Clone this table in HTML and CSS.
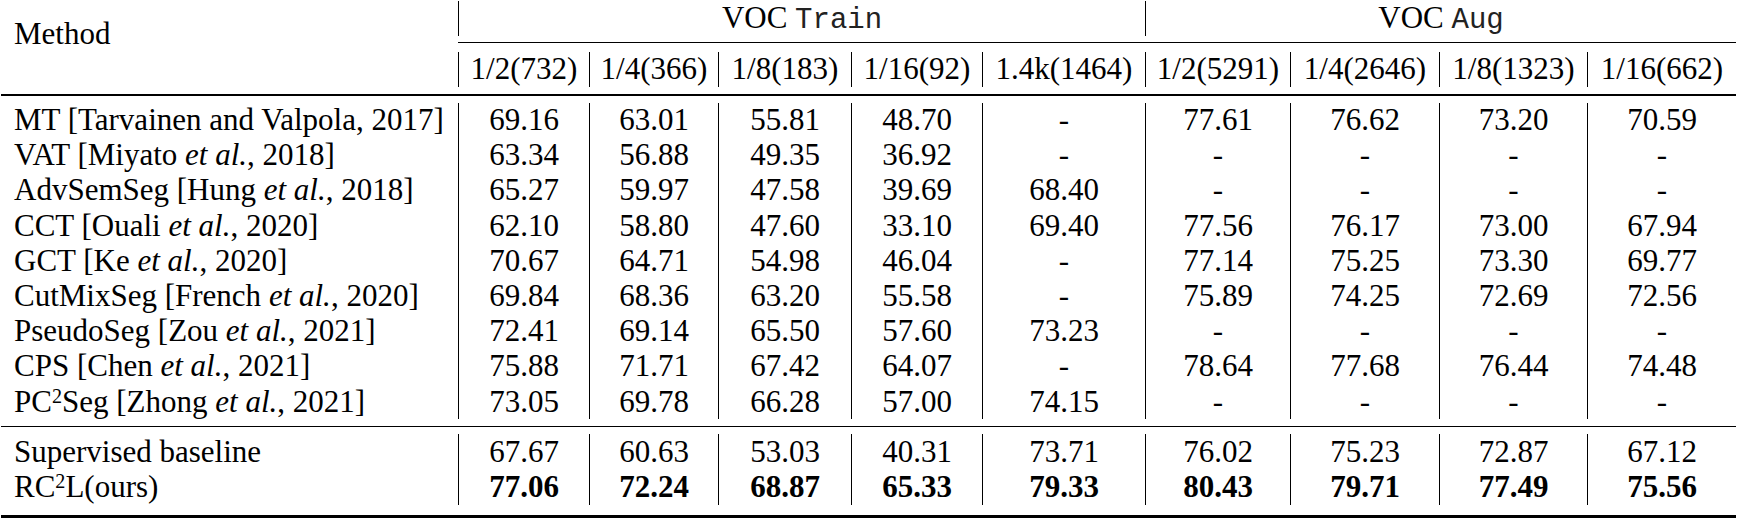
FILE: index.html
```html
<!DOCTYPE html>
<html>
<head>
<meta charset="utf-8">
<link rel="stylesheet" href="styles.css">
</head>
<body>
<div class="tbl">
  <div class="method">Method</div>
  <div class="grp g5"><span>VOC <span class="tt">Train</span></span></div>
  <div class="grp g4"><span>VOC <span class="tt">Aug</span></span></div>
  <div class="cmid"></div>

  <div class="c first">1/2(732)</div>
  <div class="c">1/4(366)</div>
  <div class="c">1/8(183)</div>
  <div class="c">1/16(92)</div>
  <div class="c">1.4k(1464)</div>
  <div class="c">1/2(5291)</div>
  <div class="c">1/4(2646)</div>
  <div class="c">1/8(1323)</div>
  <div class="c">1/16(662)</div>

  <div class="rule mid"></div>

  <div class="m"><span>MT [Tarvainen and Valpola, 2017]</span></div>
  <div class="c">69.16</div><div class="c">63.01</div><div class="c">55.81</div><div class="c">48.70</div><div class="c">-</div>
  <div class="c">77.61</div><div class="c">76.62</div><div class="c">73.20</div><div class="c">70.59</div>

  <div class="m"><span>VAT [Miyato <i>et al.</i>, 2018]</span></div>
  <div class="c">63.34</div><div class="c">56.88</div><div class="c">49.35</div><div class="c">36.92</div><div class="c">-</div>
  <div class="c">-</div><div class="c">-</div><div class="c">-</div><div class="c">-</div>

  <div class="m"><span>AdvSemSeg [Hung <i>et al.</i>, 2018]</span></div>
  <div class="c">65.27</div><div class="c">59.97</div><div class="c">47.58</div><div class="c">39.69</div><div class="c">68.40</div>
  <div class="c">-</div><div class="c">-</div><div class="c">-</div><div class="c">-</div>

  <div class="m"><span>CCT [Ouali <i>et al.</i>, 2020]</span></div>
  <div class="c">62.10</div><div class="c">58.80</div><div class="c">47.60</div><div class="c">33.10</div><div class="c">69.40</div>
  <div class="c">77.56</div><div class="c">76.17</div><div class="c">73.00</div><div class="c">67.94</div>

  <div class="m"><span>GCT [Ke <i>et al.</i>, 2020]</span></div>
  <div class="c">70.67</div><div class="c">64.71</div><div class="c">54.98</div><div class="c">46.04</div><div class="c">-</div>
  <div class="c">77.14</div><div class="c">75.25</div><div class="c">73.30</div><div class="c">69.77</div>

  <div class="m"><span>CutMixSeg [French <i>et al.</i>, 2020]</span></div>
  <div class="c">69.84</div><div class="c">68.36</div><div class="c">63.20</div><div class="c">55.58</div><div class="c">-</div>
  <div class="c">75.89</div><div class="c">74.25</div><div class="c">72.69</div><div class="c">72.56</div>

  <div class="m"><span>PseudoSeg [Zou <i>et al.</i>, 2021]</span></div>
  <div class="c">72.41</div><div class="c">69.14</div><div class="c">65.50</div><div class="c">57.60</div><div class="c">73.23</div>
  <div class="c">-</div><div class="c">-</div><div class="c">-</div><div class="c">-</div>

  <div class="m"><span>CPS [Chen <i>et al.</i>, 2021]</span></div>
  <div class="c">75.88</div><div class="c">71.71</div><div class="c">67.42</div><div class="c">64.07</div><div class="c">-</div>
  <div class="c">78.64</div><div class="c">77.68</div><div class="c">76.44</div><div class="c">74.48</div>

  <div class="m"><span>PC<sup>2</sup>Seg [Zhong <i>et al.</i>, 2021]</span></div>
  <div class="c">73.05</div><div class="c">69.78</div><div class="c">66.28</div><div class="c">57.00</div><div class="c">74.15</div>
  <div class="c">-</div><div class="c">-</div><div class="c">-</div><div class="c">-</div>

  <div class="rule thin"></div>

  <div class="m"><span>Supervised baseline</span></div>
  <div class="c">67.67</div><div class="c">60.63</div><div class="c">53.03</div><div class="c">40.31</div><div class="c">73.71</div>
  <div class="c">76.02</div><div class="c">75.23</div><div class="c">72.87</div><div class="c">67.12</div>

  <div class="m"><span>RC<sup>2</sup>L(ours)</span></div>
  <div class="c b">77.06</div><div class="c b">72.24</div><div class="c b">68.87</div><div class="c b">65.33</div><div class="c b">79.33</div>
  <div class="c b">80.43</div><div class="c b">79.71</div><div class="c b">77.49</div><div class="c b">75.56</div>

  <div class="rule bottom"></div>
</div>
</body>
</html>
```

FILE: styles.css
```css
html, body {
  margin: 0;
  padding: 0;
  background: #fff;
}

body {
  font-family: "Liberation Serif", "Times New Roman", serif;
  font-size: 31px;
  color: #000;
}

.tbl {
  margin-left: 1px;
  width: 1735px;
  padding-top: 1px;
  display: grid;
  grid-template-columns: 457px 131px 129px 133px 131px 163px 145px 149px 148px 149px;
  grid-template-rows:
    35px 15.5px 35px 16px
    35.2px 35.2px 35.2px 35.2px 35.2px 35.2px 35.2px 35.2px 35.2px
    15px 35.2px 35.2px 14px;
}

.method {
  grid-column: 1;
  grid-row: 1 / span 3;
  padding-left: 13px;
  padding-top: 15px;
  line-height: 35px;
}

.grp {
  display: flex;
  align-items: center;
  justify-content: center;
  border-left: 1px solid #000;
  white-space: nowrap;
}

.g5 { grid-column: 2 / span 5; }
.g4 { grid-column: 7 / span 4; }

.tt {
  font-family: "Liberation Mono", "Courier New", monospace;
  font-size: 29px;
  color: #222;
}

.cmid {
  grid-column: 2 / -1;
  align-self: start;
  margin-top: 6px;
  border-top: 1px solid #000;
}

.c {
  display: flex;
  align-items: center;
  justify-content: center;
  border-left: 1px solid #000;
  white-space: nowrap;
}

.first { grid-column: 2; }

.m {
  grid-column: 1;
  display: flex;
  align-items: center;
  padding-left: 13px;
  white-space: nowrap;
}

.m sup {
  font-size: 0.65em;
  line-height: 0;
  vertical-align: 0.47em;
}

.b { font-weight: bold; }

.rule {
  grid-column: 1 / -1;
  align-self: start;
}

.rule.mid {
  margin-top: 7.5px;
  border-top: 2px solid #000;
}

.rule.thin {
  margin-top: 6.5px;
  border-top: 1px solid #000;
}

.rule.bottom {
  margin-top: 10px;
  border-top: 3px solid #000;
}
```
